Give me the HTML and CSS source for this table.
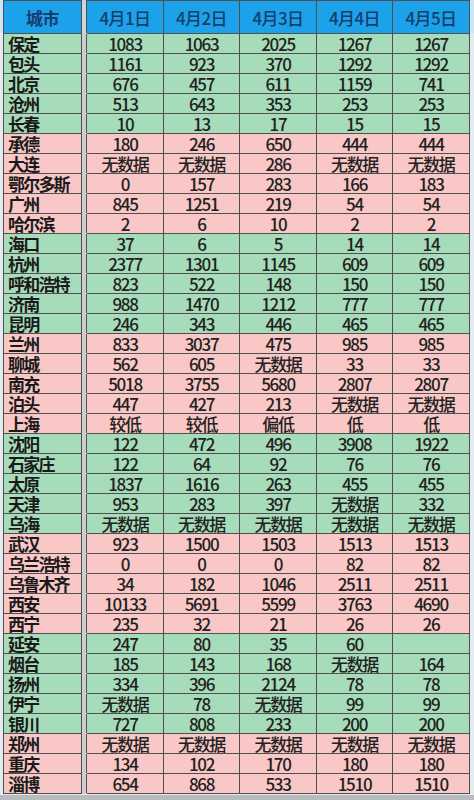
FILE: index.html
```html
<!DOCTYPE html>
<html lang="zh">
<head>
<meta charset="utf-8">
<title>城市数据</title>
<link rel="stylesheet" href="styles.css">
</head>
<body>
<div class="page">
<table class="grid">
<colgroup>
<col class="c-city"><col class="c-sep"><col class="c-d1"><col class="c-d2"><col class="c-d3"><col class="c-d4"><col class="c-d5">
</colgroup>
<thead>
<tr><th class="city-h">城市</th><th class="sep"></th><th>4月1日</th><th>4月2日</th><th>4月3日</th><th>4月4日</th><th>4月5日</th></tr>
</thead>
<tbody id="rows">
<tr class="g"><td class="city">保定</td><td class="sep"></td><td>1083</td><td>1063</td><td>2025</td><td>1267</td><td>1267</td></tr>
<tr class="g"><td class="city">包头</td><td class="sep"></td><td>1161</td><td>923</td><td>370</td><td>1292</td><td>1292</td></tr>
<tr class="g"><td class="city">北京</td><td class="sep"></td><td>676</td><td>457</td><td>611</td><td>1159</td><td>741</td></tr>
<tr class="g"><td class="city">沧州</td><td class="sep"></td><td>513</td><td>643</td><td>353</td><td>253</td><td>253</td></tr>
<tr class="g"><td class="city">长春</td><td class="sep"></td><td>10</td><td>13</td><td>17</td><td>15</td><td>15</td></tr>
<tr class="p"><td class="city">承德</td><td class="sep"></td><td>180</td><td>246</td><td>650</td><td>444</td><td>444</td></tr>
<tr class="p"><td class="city">大连</td><td class="sep"></td><td>无数据</td><td>无数据</td><td>286</td><td>无数据</td><td>无数据</td></tr>
<tr class="p"><td class="city">鄂尔多斯</td><td class="sep"></td><td>0</td><td>157</td><td>283</td><td>166</td><td>183</td></tr>
<tr class="p"><td class="city">广州</td><td class="sep"></td><td>845</td><td>1251</td><td>219</td><td>54</td><td>54</td></tr>
<tr class="p"><td class="city">哈尔滨</td><td class="sep"></td><td>2</td><td>6</td><td>10</td><td>2</td><td>2</td></tr>
<tr class="g"><td class="city">海口</td><td class="sep"></td><td>37</td><td>6</td><td>5</td><td>14</td><td>14</td></tr>
<tr class="g"><td class="city">杭州</td><td class="sep"></td><td>2377</td><td>1301</td><td>1145</td><td>609</td><td>609</td></tr>
<tr class="g"><td class="city">呼和浩特</td><td class="sep"></td><td>823</td><td>522</td><td>148</td><td>150</td><td>150</td></tr>
<tr class="g"><td class="city">济南</td><td class="sep"></td><td>988</td><td>1470</td><td>1212</td><td>777</td><td>777</td></tr>
<tr class="g"><td class="city">昆明</td><td class="sep"></td><td>246</td><td>343</td><td>446</td><td>465</td><td>465</td></tr>
<tr class="p"><td class="city">兰州</td><td class="sep"></td><td>833</td><td>3037</td><td>475</td><td>985</td><td>985</td></tr>
<tr class="p"><td class="city">聊城</td><td class="sep"></td><td>562</td><td>605</td><td>无数据</td><td>33</td><td>33</td></tr>
<tr class="p"><td class="city">南充</td><td class="sep"></td><td>5018</td><td>3755</td><td>5680</td><td>2807</td><td>2807</td></tr>
<tr class="p"><td class="city">泊头</td><td class="sep"></td><td>447</td><td>427</td><td>213</td><td>无数据</td><td>无数据</td></tr>
<tr class="p"><td class="city">上海</td><td class="sep"></td><td>较低</td><td>较低</td><td>偏低</td><td>低</td><td>低</td></tr>
<tr class="g"><td class="city">沈阳</td><td class="sep"></td><td>122</td><td>472</td><td>496</td><td>3908</td><td>1922</td></tr>
<tr class="g"><td class="city">石家庄</td><td class="sep"></td><td>122</td><td>64</td><td>92</td><td>76</td><td>76</td></tr>
<tr class="g"><td class="city">太原</td><td class="sep"></td><td>1837</td><td>1616</td><td>263</td><td>455</td><td>455</td></tr>
<tr class="g"><td class="city">天津</td><td class="sep"></td><td>953</td><td>283</td><td>397</td><td>无数据</td><td>332</td></tr>
<tr class="g"><td class="city">乌海</td><td class="sep"></td><td>无数据</td><td>无数据</td><td>无数据</td><td>无数据</td><td>无数据</td></tr>
<tr class="p"><td class="city">武汉</td><td class="sep"></td><td>923</td><td>1500</td><td>1503</td><td>1513</td><td>1513</td></tr>
<tr class="p"><td class="city">乌兰浩特</td><td class="sep"></td><td>0</td><td>0</td><td>0</td><td>82</td><td>82</td></tr>
<tr class="p"><td class="city">乌鲁木齐</td><td class="sep"></td><td>34</td><td>182</td><td>1046</td><td>2511</td><td>2511</td></tr>
<tr class="p"><td class="city">西安</td><td class="sep"></td><td>10133</td><td>5691</td><td>5599</td><td>3763</td><td>4690</td></tr>
<tr class="p"><td class="city">西宁</td><td class="sep"></td><td>235</td><td>32</td><td>21</td><td>26</td><td>26</td></tr>
<tr class="g"><td class="city">延安</td><td class="sep"></td><td>247</td><td>80</td><td>35</td><td>60</td><td></td></tr>
<tr class="g"><td class="city">烟台</td><td class="sep"></td><td>185</td><td>143</td><td>168</td><td>无数据</td><td>164</td></tr>
<tr class="g"><td class="city">扬州</td><td class="sep"></td><td>334</td><td>396</td><td>2124</td><td>78</td><td>78</td></tr>
<tr class="g"><td class="city">伊宁</td><td class="sep"></td><td>无数据</td><td>78</td><td>无数据</td><td>99</td><td>99</td></tr>
<tr class="g"><td class="city">银川</td><td class="sep"></td><td>727</td><td>808</td><td>233</td><td>200</td><td>200</td></tr>
<tr class="p"><td class="city">郑州</td><td class="sep"></td><td>无数据</td><td>无数据</td><td>无数据</td><td>无数据</td><td>无数据</td></tr>
<tr class="p"><td class="city">重庆</td><td class="sep"></td><td>134</td><td>102</td><td>170</td><td>180</td><td>180</td></tr>
<tr class="p"><td class="city">淄博</td><td class="sep"></td><td>654</td><td>868</td><td>533</td><td>1510</td><td>1510</td></tr>
</tbody>
</table>
</div>
</body>
</html>
```

FILE: styles.css
```css
html, body {
  margin: 0;
  padding: 0;
}
body {
  background: #c9cdd0;
  font-family: "Noto Sans CJK SC", "Noto Sans", sans-serif;
  color: #1e1e1e;
}
.page {
  width: 474px;
  height: 800px;
  background: linear-gradient(#c9e7f6 0 33px, #e4ecef 33px 795px, #b9bcbe 795px);
  padding-left: 3px;
  box-sizing: border-box;
}
.grid {
  border-collapse: collapse;
  table-layout: fixed;
  width: 466px;
}
.c-city { width: 78px; }
.c-sep { width: 5px; }
.c-d1, .c-d3, .c-d5 { width: 77px; }
.c-d2, .c-d4 { width: 76px; }

.grid th, .grid td {
  border: 1px solid #505050;
  padding: 0;
  text-align: center;
  white-space: nowrap;
}
.grid th {
  height: 32px;
  background: #1ca2ea;
  color: #173d6a;
  font-size: 17px;
  font-weight: 500;
  letter-spacing: -0.6px;
}
.grid th.city-h {
  font-weight: 700;
}
.grid td {
  height: 19px;
  line-height: 18px;
  font-size: 17px;
  letter-spacing: -1.3px;
  font-weight: 500;
  color: #222;
}
.grid td.city {
  text-align: left;
  padding-left: 4px;
  font-weight: 700;
  letter-spacing: -1.8px;
  color: #1a1a1a;
}
.grid .sep {
  background: #cfcfcf;
  border-top-color: #cfcfcf;
  border-bottom-color: #cfcfcf;
}
.grid thead .sep {
  background: #cfd6da;
}
tr.g td { background: #a6dcb9; }
tr.p td { background: #f8c7c6; }
tr.g td.sep, tr.p td.sep { background: #cdcdcd; }
```
